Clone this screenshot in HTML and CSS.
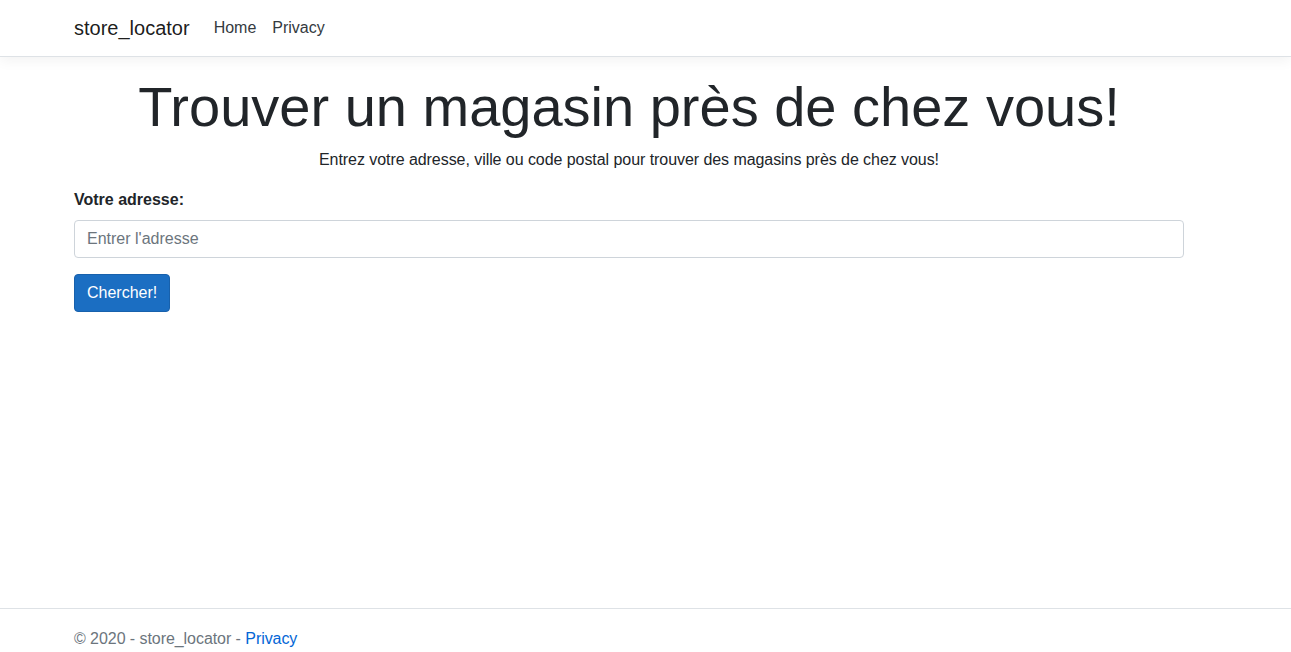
FILE: index.html
```html
<!DOCTYPE html>
<html lang="fr">
<head>
<meta charset="utf-8">
<title>store_locator</title>
<link rel="stylesheet" href="styles.css">
</head>
<body>
<header class="navbar">
  <div class="container nav-inner">
    <a class="brand" href="#">store_locator</a>
    <nav class="nav-links">
      <a class="nav-link" href="#">Home</a>
      <a class="nav-link" href="#">Privacy</a>
    </nav>
  </div>
</header>
<main class="container main">
  <div class="intro">
    <h1 class="display">Trouver un magasin près de chez vous!</h1>
    <p class="lead-text">Entrez votre adresse, ville ou code postal pour trouver des magasins près de chez vous!</p>
  </div>
  <form class="search-form">
    <div class="form-group">
      <label class="label" for="addr">Votre adresse:</label>
      <input class="input" id="addr" type="text" placeholder="Entrer l'adresse">
    </div>
    <button class="btn" type="button">Chercher!</button>
  </form>
</main>
<footer class="footer">
  <div class="container footer-inner">© 2020 - store_locator - <a class="footer-link" href="#">Privacy</a></div>
</footer>
</body>
</html>
```
FILE: styles.css
```css
* { box-sizing: border-box; }
html, body { margin: 0; padding: 0; }
body {
  font-family: "Liberation Sans", Arial, sans-serif;
  font-size: 16px;
  line-height: 1.5;
  color: #212529;
  background: #fff;
  min-height: 100vh;
  display: flex;
  flex-direction: column;
}
.container {
  width: 1140px;
  margin-left: 59px;
  padding: 0 15px;
}
.navbar {
  height: 57px;
  border-bottom: 1px solid #dee2e6;
  box-shadow: 0 4px 12px rgba(0,0,0,.05);
  background: #fff;
  margin-bottom: 16px;
}
.nav-inner {
  display: flex;
  align-items: center;
  height: 56px;
}
.brand {
  font-size: 20px;
  line-height: 30px;
  color: rgba(0,0,0,.9);
  text-decoration: none;
  margin-right: 16px;
}
.nav-links { display: flex; }
.nav-link {
  padding: 8px;
  color: #343a40;
  text-decoration: none;
  font-size: 16px;
  line-height: 24px;
}
.main { flex: 1; }
.intro { text-align: center; }
.display {
  font-size: 56px;
  font-weight: 300;
  line-height: 1.2;
  margin: 0 0 8px;
}
.lead-text {
  margin: 0 0 16px;
  letter-spacing: -0.06px;
}
.form-group { margin-bottom: 16px; }
.label {
  display: block;
  font-weight: bold;
  margin-bottom: 8px;
}
.input {
  display: block;
  width: 100%;
  height: 38px;
  padding: 6px 12px;
  font-family: inherit;
  font-size: 16px;
  line-height: 1.5;
  color: #495057;
  border: 1px solid #ced4da;
  border-radius: 4px;
  background: #fff;
}
.input::placeholder { color: #6c757d; }
.btn {
  font-family: inherit;
  font-size: 16px;
  line-height: 1.5;
  padding: 6px 12px;
  color: #fff;
  background: #1b6ec2;
  border: 1px solid #1861ac;
  border-radius: 4px;
  height: 38px;
}
.footer {
  border-top: 1px solid #dee2e6;
  height: 44px;
  overflow: hidden;
  line-height: 60px;
  color: #6c757d;
  white-space: nowrap;
  letter-spacing: -0.06px;
}
.footer-link { color: #0366d6; text-decoration: none; }
```
